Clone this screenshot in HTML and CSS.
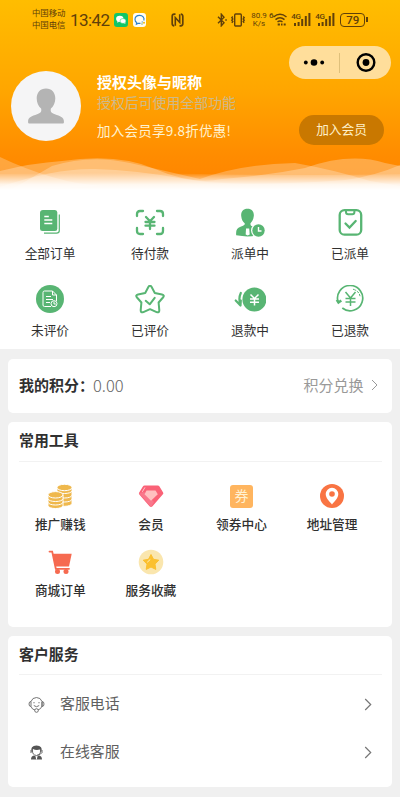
FILE: index.html
```html
<!DOCTYPE html>
<html lang="zh-CN">
<head>
<meta charset="UTF-8">
<meta name="viewport" content="width=device-width, initial-scale=1">
<title>我的</title>
<link rel="stylesheet" href="styles.css">
</head>
<body>
<header class="hero">
  <div class="status">
    <div class="carriers"><span>中国移动</span><span>中国电信</span></div>
    <span class="clock">13:42</span>
    <svg class="app" width="14" height="14" viewBox="0 0 14 14"><rect width="14" height="14" rx="3" fill="#12c566"/><ellipse cx="5.8" cy="5.8" rx="3.7" ry="3.1" fill="#fff"/><path d="M3.5 8l-.3 1.8 2-1z" fill="#fff"/><ellipse cx="9" cy="8" rx="3" ry="2.5" fill="#fff" stroke="#12c566" stroke-width=".5"/><path d="M10 10l1.3.9-.1-1.5z" fill="#fff"/></svg>
    <svg class="chat" width="13" height="14" viewBox="0 0 13 14"><rect width="13" height="14" rx="3" fill="#fffdf4"/><path d="M10.800 7.500C11.800 4.500 9.500 2.300 6.700 2.300 3.800 2.300 2 4.200 2 6.500c0 1.500.8 2.500 1.700 3.100L3.400 11.200l1.900-.9 2.200.1" fill="none" stroke="#2f82cd" stroke-width="1.200"/><circle cx="9" cy="11" r=".8" fill="#8bb56f"/><circle cx="11" cy="9.800" r="1" fill="#f4bb13"/><circle cx="9.200" cy="9" r=".7" fill="#5a98c9"/></svg>
    <svg class="nfc" width="13" height="14" viewBox="0 0 13 14" fill="none" stroke="#60400a"><path d="M4.500 1.200H3.200Q1.200 1.200 1.200 3.500v7q0 2.300 2 2.300M8.500 12.800h1.300q2 0 2-2.300v-7q0-2.300-2-2.300" stroke-width="1.700"/><path d="M4.300 12.800V4.500l4.400 5V1.200" stroke-width="1.600"/></svg>
    <svg class="bt" width="10" height="14" viewBox="0 0 10 14" fill="none" stroke="#60400a" stroke-width="1.400"><path d="M1 3.800l6 6L4.300 12.800V1.200L7 4.200l-6 6"/><path d="M8.300 7h1.500"/></svg>
    <svg class="vib" width="16" height="14" viewBox="0 0 16 14" fill="none" stroke="#60400a" stroke-width="1.400"><rect x="4.700" y="1" width="6.600" height="12" rx="1"/><path d="M2.800 3.500l-1 1.200 1 1.200-1 1.300 1 1.200-1 1.300M13.200 3.500l1 1.200-1 1.200 1 1.300-1 1.200 1 1.300"/></svg>
    <div class="speed"><span>80.9</span><span>K/s</span></div>
    <span class="tiny six">6</span>
    <svg class="wifi" width="14" height="13" viewBox="0 0 14 13" fill="none" stroke="#60400a" stroke-width="1.500"><path d="M.5 4Q7-1.300 13.500 4M2.500 6.600Q7 2.900 11.500 6.600M4.500 9Q7 7 9.500 9"/><path d="M4.700 11.600h2.200M8 11.600h1.500M10.700 11.600h2" stroke-width="2"/></svg>
    <div class="signal"><span class="tiny">4G</span><svg width="20" height="14" viewBox="0 0 20 14" fill="#60400a"><path d="M3 10h2v3H3zM6.600 9h2v4h-2zM10.200 6h2v7h-2zM13.800 3h2v10h-2zM17.400 0h2v13h-2z"/></svg></div>
    <div class="signal"><span class="tiny">4G</span><svg width="20" height="14" viewBox="0 0 20 14" fill="#60400a"><path d="M3 10h2v3H3zM6.600 9h2v4h-2zM10.200 6h2v7h-2zM13.800 3h2v10h-2zM17.400 0h2v13h-2z"/></svg></div>
    <div class="battery">79</div>
  </div>
  <div class="capsule">
    <svg width="50" height="33" viewBox="0 0 50 33"><circle cx="16.800" cy="16.500" r="1.900"/><circle cx="25" cy="16.500" r="3.300"/><circle cx="33.200" cy="16.500" r="1.900"/></svg>
    <i class="split"></i>
    <svg width="52" height="33" viewBox="0 0 52 33"><circle cx="27" cy="16.500" r="8.300" fill="none" stroke="#000" stroke-width="2.400"/><circle cx="27" cy="16.500" r="3.400"/></svg>
  </div>
  <div class="profile">
    <svg class="avatar" width="70" height="70" viewBox="0 0 70 70"><circle cx="35" cy="35" r="35" fill="#f5f5f6"/><path d="M35 17.500c5.800 0 9.300 4.200 9.300 9.800 0 4.500-1.800 8.200-4.400 10.300-.8 3.400.6 4.600 4 5.700 5.200 1.700 9 3.200 9 7v1.200q0 1-1 1H18.100q-1 0-1-1v-1.200c0-3.800 3.800-5.300 9-7 3.400-1.100 4.800-2.300 4-5.700-2.600-2.100-4.400-5.800-4.400-10.300 0-5.600 3.500-9.800 9.300-9.800z" fill="#b4b4b4"/></svg>
    <div class="who">
      <div class="name">授权头像与昵称</div>
      <div class="hint">授权后可使用全部功能</div>
      <div class="promo">加入会员享9.8折优惠!</div>
    </div>
    <div class="join">加入会员</div>
  </div>
  <svg class="waves" width="400" height="42" viewBox="0 0 400 42">
    <defs><linearGradient id="fade" x1="0" y1="0" x2="0" y2="1"><stop offset="0" stop-color="#fff" stop-opacity="0"/><stop offset=".5" stop-color="#fff" stop-opacity=".85"/><stop offset=".75" stop-color="#fff"/></linearGradient></defs>
    <path d="M0 3Q25 15 52 23T105 32L0 36z" fill="#fff" fill-opacity=".24"/>
    <path d="M0 17Q32 9 62 7Q118-1 155 15T222 25Q265 22 305 14Q350-2 385 9L400 12V42H0z" fill="#fff" fill-opacity=".27"/>
    <path d="M52 12Q90 0 130 9T200 25Q240 10 295 9Q335 16 370 27L400 32V42H0z" fill="#fff" fill-opacity=".25"/>
    <path d="M0 33Q55 14 95 15T185 25T345 26Q375 22 400 11V42H0z" fill="#fff" fill-opacity=".25"/>
    <path d="M0 20Q110 18 200 20T400 20V42H0z" fill="url(#fade)"/>
  </svg>
</header>

<section class="orders">
  <div class="order">
    <svg width="30" height="30" viewBox="0 0 30 30"><path d="M8 2h12q2.300 0 2.300 2.500v16.200q0 2.300-2.300 2.300H7.500Q5 23 5 20.700V5q0-3 3-3z" fill="#58b573"/><path d="M9.300 8.500h4.500M9.300 12.100h8M9.300 15.500h8" stroke="#fff" stroke-width="1.500"/><path d="M24.300 6.500v16q0 2.700-2.800 2.700H9" fill="none" stroke="#58b573" stroke-width="1.200"/></svg>
    <span>全部订单</span>
  </div>
  <div class="order">
    <svg width="30" height="30" viewBox="0 0 30 30" fill="none" stroke="#58b573" stroke-width="2.300" stroke-linecap="round"><path d="M2 8V6q0-3 3-3h3M22 3h3q3 0 3 3v2M28 20v3q0 3-3 3h-3M8 26H5q-3 0-3-3v-3"/><path d="M11 9l4 4.200L19 9M10.500 14h9M10.500 17.700h9M15 13.500v7.500"/></svg>
    <span>待付款</span>
  </div>
  <div class="order">
    <svg width="30" height="30" viewBox="0 0 30 30"><path d="M12.500.8c4.500 0 6.700 3.200 6.300 7.200-.3 3.600-2 6-3.300 7.200-.2 2.200.4 2.700 3 3.500l3 8.600q-8 2.200-20.300 0C.7 22 2 19.800 5.500 18.700c3.600-1.200 4.500-1.500 4.200-3.500C7.800 14 6.600 11.700 6.200 8 5.800 4 8 .8 12.500.8z" fill="#58b573"/><path d="M11 20.500h3.200l.5 6-2 1-2-1z" fill="#fff"/><circle cx="23.500" cy="22.500" r="7.500" fill="#fff"/><circle cx="23.500" cy="22.500" r="6.200" fill="#58b573"/><path d="M23.500 19v4h3" fill="none" stroke="#fff" stroke-width="1.400"/></svg>
    <span>派单中</span>
  </div>
  <div class="order">
    <svg width="30" height="30" viewBox="0 0 30 30" fill="none" stroke="#58b573" stroke-width="2.300"><rect x="4.700" y="2.200" width="21.500" height="24.500" rx="4.800"/><path d="M11 2v2q0 2.200 2.200 2.200h4q2.200 0 2.200-2.200V2" stroke-width="2"/><path d="M10.500 15.500l4 4 6.200-6.500" stroke-linecap="round"/></svg>
    <span>已派单</span>
  </div>
  <div class="order">
    <svg width="30" height="30" viewBox="0 0 30 30"><circle cx="15" cy="14" r="14" fill="#58b573"/><g fill="none" stroke="#fff" stroke-width="1"><path d="M16 21.500h-6.500Q8 21.500 8 20V7.500Q8 6 9.500 6h8l4 4v6M17.500 6v4h4M11 11.500h5M11 14.500h7M11 17.500h4"/><circle cx="19" cy="18.700" r="3"/><path d="M19 16.700v2.300h1.800"/></g></svg>
    <span>未评价</span>
  </div>
  <div class="order">
    <svg width="30" height="30" viewBox="0 0 30 30" fill="none" stroke="#58b573" stroke-width="2" stroke-linejoin="round"><path d="M13.500 1.800q1.500-2.300 3 0L19.800 8 27 9.500q2.900.8 1 3L23.600 17.500l.7 7.700q0 2.900-2.700 1.900L15 24.200l-6.600 2.900q-2.700 1-2.700-1.900l.7-7.700L2 12.500q-1.900-2.200 1-3L10.200 8z"/><path d="M10.700 15.800l4 3.500 5-6.500" stroke-linecap="round"/></svg>
    <span>已评价</span>
  </div>
  <div class="order">
    <svg width="32" height="30" viewBox="0 0 32 30"><circle cx="20.400" cy="14.500" r="12" fill="#58b573"/><path d="M16.500 9.500l4 4 4-4M16 14h9M16 17.200h9M20.500 13.500v7" fill="none" stroke="#fff" stroke-width="1.500"/><path d="M6.800 8Q4.200 13.500 6.500 20M1.700 15.500l4.800 5 .3-5" fill="none" stroke="#58b573" stroke-width="2.200" stroke-linecap="round" stroke-linejoin="round"/></svg>
    <span>退款中</span>
  </div>
  <div class="order">
    <svg width="30" height="30" viewBox="0 0 30 30" fill="none" stroke="#58b573"><path d="M3.300 17.500A12.600 12.600 0 1 1 7.300 23" stroke-width="1.700"/><path d="M1.800 14.800l1.700 2.700 2.800-2" stroke-width="2.500"/><path d="M10.500 7l5 6 5-6M10.500 13.500h10M10.500 17h10M15.500 13v8" stroke-width="1.500"/><path d="M18 4.200q6 1.700 7 7" stroke-width="1" stroke-dasharray="3 1"/></svg>
    <span>已退款</span>
  </div>
</section>

<main class="cards">
  <section class="card points">
    <b>我的积分：</b><span class="score">0.00</span>
    <span class="redeem">积分兑换</span>
    <svg width="7" height="12" viewBox="0 0 7 12" fill="none" stroke="#999" stroke-width="1"><path d="M1 1l5 5-5 5"/></svg>
  </section>

  <section class="card tools">
    <h2>常用工具</h2>
    <div class="tool-grid">
      <div class="tool">
        <svg width="26" height="26" viewBox="0 0 26 26" fill="#efb84c" stroke="#fff" stroke-width="1"><g><path d="M10 16.500v3.800c0 4 15 4 15 0v-3.800z"/><path d="M10 12v4c0 4 15 4 15 0v-4z"/><path d="M10 8v4c0 4 15 4 15 0V8z"/><path d="M10 4.500v3c0 4 15 4 15 0v-3z"/><ellipse cx="17.500" cy="4.500" rx="7.500" ry="3.200"/><path d="M1 19v3.500c0 4 15 4 15 0V19z"/><path d="M1 15.500V19c0 4 15 4 15 0v-3.500z"/><path d="M1 11.800v3.700c0 4 15 4 15 0v-3.700z"/><ellipse cx="8.500" cy="11.800" rx="7.500" ry="3.200"/></g></svg>
        <span>推广赚钱</span>
      </div>
      <div class="tool">
        <svg width="26" height="26" viewBox="0 0 26 26"><path d="M6.500 2.500h13.300q1 0 1.700.9l3.600 6q.6 1-.2 1.900L14.500 23.200q-1.500 1.500-3 0L1.300 11.500q-.8-.9-.1-1.900l3.700-6.200q.6-.9 1.600-.9z" fill="#fa6277"/><path d="M1 10l12 14 3-5L6 9z" fill="#f9869a" opacity=".6"/><path d="M8.500 7.500h9l2.300 3.800-6.800 6.500-6.500-6.500z" fill="#ffc0c0"/><path d="M4.500 8.500l2.300-3.800" stroke="#ffc5cb" stroke-linecap="round"/></svg>
        <span>会员</span>
      </div>
      <div class="tool">
        <div class="ticket">券</div>
        <span>领券中心</span>
      </div>
      <div class="tool">
        <svg width="26" height="26" viewBox="0 0 26 26"><circle cx="13" cy="13" r="12" fill="#f97443"/><path d="M13 4.800a6.300 6.300 0 0 1 6.300 6.300c0 4-4 8-6.300 10.300-2.300-2.300-6.300-6.300-6.300-10.300A6.300 6.300 0 0 1 13 4.800z" fill="#fff"/><circle cx="13" cy="11" r="2.800" fill="#f97443"/></svg>
        <span>地址管理</span>
      </div>
      <div class="tool">
        <svg width="26" height="26" viewBox="0 0 26 26" fill="#f66a50"><path d="M5.500 4.800h19.200L22 17.400H8.200z"/><path d="M2.500 2.600h2.700L8.800 19.800H22" fill="none" stroke="#f66a50" stroke-width="1.800" stroke-linecap="round"/><circle cx="10.500" cy="22.500" r="2.500"/><circle cx="19" cy="22.500" r="2.500"/></svg>
        <span>商城订单</span>
      </div>
      <div class="tool">
        <svg width="26" height="26" viewBox="0 0 26 26"><circle cx="13" cy="13" r="12.300" fill="#fae6ae"/><path d="M13 5.500l2.500 4.800 5.300.9-3.800 3.900.8 5.300-4.800-2.400-4.800 2.400.8-5.300-3.800-3.900 5.300-.9z" fill="#fbc02f" stroke="#fbc02f" stroke-width="1" stroke-linejoin="round"/><path d="M9.500 13l2.500-2.300" stroke="#fff0bd" stroke-linecap="round"/></svg>
        <span>服务收藏</span>
      </div>
    </div>
  </section>

  <section class="card service">
    <h2>客户服务</h2>
    <div class="row">
      <svg width="17" height="17" viewBox="0 0 17 17" fill="none" stroke="#666" stroke-width=".9"><path d="M3 5.500A5.800 5.800 0 0 1 14 5.500M3 10.500q1 3 4 3.600M14 6v4q-.8 3-4 4"/><path d="M3 5.500q-2 0-2 2.500t2 2.500zM14 5.500q2 0 2 2.500t-2 2.500z"/><circle cx="8.500" cy="14.500" r="1.800"/><path d="M5.800 9.500q2.700 2.500 5.400 0M6 6v1.300M11 6v1.300"/></svg>
      <span>客服电话</span>
      <svg width="8" height="13" viewBox="0 0 8 13" fill="none" stroke="#777" stroke-width="1.200"><path d="M1.200 1l5.500 5.500L1.200 12"/></svg>
    </div>
    <div class="row">
      <svg width="17" height="17" viewBox="0 0 17 17"><path d="M3.500 8Q2 1.700 8.500 1.500 15 1.700 13.500 8L12 5.500Q8 6.500 5 5L4.500 8z" fill="#555"/><path d="M4.500 6q-.5 5 4 5.500 4.500-.5 4-5.500M3 6v3M14 6v3M13.500 9q-1 2-4 2" fill="none" stroke="#666"/><path d="M3 15.500q0-3.500 3-4l2.500 1.500 2.500-1.500q3 .5 3 4z" fill="#555"/><path d="M7.600 12.600h1.800l-.5 2.900h-.8z" fill="#fff"/></svg>
      <span>在线客服</span>
      <svg width="8" height="13" viewBox="0 0 8 13" fill="none" stroke="#777" stroke-width="1.200"><path d="M1.200 1l5.500 5.500L1.200 12"/></svg>
    </div>
  </section>
</main>
</body>
</html>
```
FILE: styles.css
```css
* { box-sizing: border-box; }
body {
  margin: 0;
  background: #f0f0f0;
  color: #303030;
  font-family: "Noto Sans CJK SC", sans-serif;
}
svg { display: block; flex: none; }
span, b { white-space: nowrap; }

.hero {
  position: relative;
  height: 195px;
  background: linear-gradient(#ffbd00 0, #ffa600 90px, #ff8c00 155px, #ff8200 195px);
}
.status {
  display: flex;
  align-items: center;
  height: 39px;
  padding-left: 32px;
  color: #60400a;
}
.carriers { display: flex; flex-direction: column; width: 34px; margin-top: -3px; font-size: 8.4px; line-height: 12px; }
.clock { width: 40px; margin-left: 4px; font: 17px/20px Roboto, sans-serif; letter-spacing: -.6px; }
.app { margin-left: 4px; }
.chat { margin-left: 5px; }
.nfc { margin-left: 25px; }
.bt { margin-left: 33px; }
.vib { margin-left: 3px; }
.speed {
  display: flex;
  flex-direction: column;
  align-items: center;
  width: 18px;
  margin-left: 4px;
  font: 8px/8px Roboto, sans-serif;
}
.tiny { font: 500 8px/7px Roboto, sans-serif; letter-spacing: -.3px; }
.six { align-self: flex-start; margin: 12px 0 0 1px; }
.signal { position: relative; width: 20px; margin-left: 4px; }
.signal .tiny { position: absolute; left: 0; top: 0; }
.battery {
  position: relative;
  width: 25px;
  height: 14px;
  margin-left: 5px;
  border: 1.5px solid #60400a;
  border-radius: 4px;
  font: 500 11.500px/12px Roboto, sans-serif;
  text-align: center;
}
.battery::after {
  content: "";
  position: absolute;
  right: -4px;
  top: 3px;
  width: 2px;
  height: 5px;
  background: #60400a;
}
.capsule {
  position: absolute;
  left: 289px;
  top: 46px;
  display: flex;
  align-items: center;
  width: 102px;
  height: 33px;
  border-radius: 17px;
  background: #ffde9b;
}
.split { width: 1px; height: 20px; margin-right: -1px; background: #dfc07b; }
.profile { display: flex; padding: 32px 16px 0 11px; }
.who { width: 218px; padding-left: 16px; white-space: nowrap; }
.name { color: #fff; font-size: 15px; font-weight: 700; line-height: 22px; }
.hint { color: #ccba8c; font-size: 13.900px; line-height: 18px; }
.promo { margin-top: 9px; color: #fff2cf; font-size: 13.500px; line-height: 20px; letter-spacing: .25px; }
.join {
  flex: none;
  width: 85px;
  height: 30px;
  margin-top: 44px;
  border-radius: 15px;
  background: #c97800;
  color: #fff0c8;
  font-size: 12.700px;
  line-height: 28px;
  text-align: center;
}
.waves { position: absolute; left: 0; bottom: -1px; }

.orders {
  display: grid;
  grid-template-columns: repeat(4, 1fr);
  grid-auto-rows: 77px;
  height: 154px;
  padding-top: 13px;
  background: #fff;
}
.order, .tool { display: flex; flex-direction: column; align-items: center; }
.order span { margin-top: 5px; font-size: 12.700px; line-height: 20px; }

.cards { display: flex; flex-direction: column; gap: 9px; padding: 10px 8.500px 10px 8px; }
.card { border-radius: 5px; background: #fff; }
.points { display: flex; align-items: center; height: 54px; padding: 0 14px 2px 11px; font-size: 15px; line-height: 22px; }
.points b, .points span { margin-top: -1px; }
.points b { width: 74px; }
.points .score { color: #666; font-size: 16.500px; font-weight: 300; }
.points .redeem { margin: -1px 7px 0 auto; color: #999; }
h2 {
  height: 40px;
  margin: 0 10px 0 11px;
  border-bottom: 1px solid #f2f2f2;
  font-size: 14.900px;
  font-weight: 700;
  line-height: 36px;
}
.tools { height: 205px; }
.tool-grid {
  display: grid;
  grid-template-columns: repeat(4, 90.600px);
  grid-auto-rows: 66px;
  padding: 21px 0 0 7px;
}
.tool span { margin-top: 5px; font-size: 12.700px; font-weight: 500; line-height: 20px; }
.ticket {
  width: 23px;
  height: 23px;
  margin: 2px 0 1px;
  border-radius: 3px;
  background: #ffb55f;
  color: #fff2d2;
  font-size: 14px;
  line-height: 21px;
  text-align: center;
}
.service { height: 151px; }
.service h2 { height: 39px; }
.row { display: flex; align-items: center; height: 48px; padding: 0 20px; color: #606060; font-size: 14.900px; line-height: 22px; }
.service h2 + .row { margin-top: 5px; }
.row span { flex: 1; margin: -2px 0 0 15px; }
```
